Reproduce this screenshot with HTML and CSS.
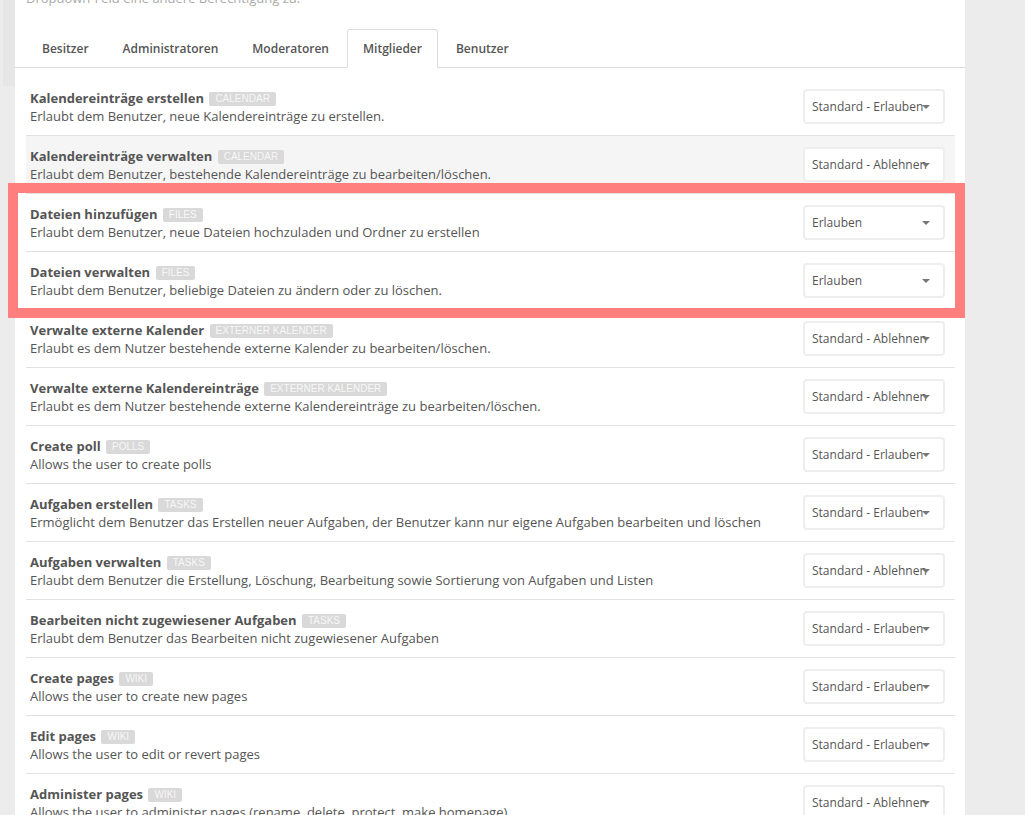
FILE: index.html
```html
<!DOCTYPE html>
<html lang="de">

<head>
    <title>Berechtigungen</title>
    <meta charset="UTF-8">
    <link rel="stylesheet" href="styles.css">
</head>

<body>
    <div class="side-strip"></div>
    <div class="panel">
        <p class="intro">Dropdown-Feld eine andere Berechtigung zu.</p>

        <ul class="tabs">
            <li>Besitzer</li>
            <li>Administratoren</li>
            <li>Moderatoren</li>
            <li class="active">Mitglieder</li>
            <li>Benutzer</li>
        </ul>

        <div class="perm-list">
            <div class="perm-row">
                <div class="perm-text">
                    <div class="perm-title">Kalendereinträge erstellen <span class="badge">calendar</span></div>
                    <div class="perm-desc">Erlaubt dem Benutzer, neue Kalendereinträge zu erstellen.</div>
                </div>
                <div class="select">Standard - Erlauben<span class="caret"></span></div>
            </div>
            <div class="perm-row hover">
                <div class="perm-text">
                    <div class="perm-title">Kalendereinträge verwalten <span class="badge">calendar</span></div>
                    <div class="perm-desc">Erlaubt dem Benutzer, bestehende Kalendereinträge zu bearbeiten/löschen.</div>
                </div>
                <div class="select">Standard - Ablehnen<span class="caret"></span></div>
            </div>

            <!-- markierte Zeilen -->
            <div class="marked">
                <div class="perm-row">
                    <div class="perm-text">
                        <div class="perm-title">Dateien hinzufügen <span class="badge">files</span></div>
                        <div class="perm-desc">Erlaubt dem Benutzer, neue Dateien hochzuladen und Ordner zu erstellen</div>
                    </div>
                    <div class="select">Erlauben<span class="caret"></span></div>
                </div>
                <div class="perm-row">
                    <div class="perm-text">
                        <div class="perm-title">Dateien verwalten <span class="badge">files</span></div>
                        <div class="perm-desc">Erlaubt dem Benutzer, beliebige Dateien zu ändern oder zu löschen.</div>
                    </div>
                    <div class="select">Erlauben<span class="caret"></span></div>
                </div>
            </div>

            <div class="perm-row">
                <div class="perm-text">
                    <div class="perm-title">Verwalte externe Kalender <span class="badge">externer kalender</span></div>
                    <div class="perm-desc">Erlaubt es dem Nutzer bestehende externe Kalender zu bearbeiten/löschen.</div>
                </div>
                <div class="select">Standard - Ablehnen<span class="caret"></span></div>
            </div>
            <div class="perm-row">
                <div class="perm-text">
                    <div class="perm-title">Verwalte externe Kalendereinträge <span class="badge">externer kalender</span></div>
                    <div class="perm-desc">Erlaubt es dem Nutzer bestehende externe Kalendereinträge zu bearbeiten/löschen.</div>
                </div>
                <div class="select">Standard - Ablehnen<span class="caret"></span></div>
            </div>
            <div class="perm-row">
                <div class="perm-text">
                    <div class="perm-title">Create poll <span class="badge">polls</span></div>
                    <div class="perm-desc">Allows the user to create polls</div>
                </div>
                <div class="select">Standard - Erlauben<span class="caret"></span></div>
            </div>
            <div class="perm-row">
                <div class="perm-text">
                    <div class="perm-title">Aufgaben erstellen <span class="badge">tasks</span></div>
                    <div class="perm-desc">Ermöglicht dem Benutzer das Erstellen neuer Aufgaben, der Benutzer kann nur eigene Aufgaben bearbeiten und löschen</div>
                </div>
                <div class="select">Standard - Erlauben<span class="caret"></span></div>
            </div>
            <div class="perm-row">
                <div class="perm-text">
                    <div class="perm-title">Aufgaben verwalten <span class="badge">tasks</span></div>
                    <div class="perm-desc">Erlaubt dem Benutzer die Erstellung, Löschung, Bearbeitung sowie Sortierung von Aufgaben und Listen</div>
                </div>
                <div class="select">Standard - Ablehnen<span class="caret"></span></div>
            </div>
            <div class="perm-row">
                <div class="perm-text">
                    <div class="perm-title">Bearbeiten nicht zugewiesener Aufgaben <span class="badge">tasks</span></div>
                    <div class="perm-desc">Erlaubt dem Benutzer das Bearbeiten nicht zugewiesener Aufgaben</div>
                </div>
                <div class="select">Standard - Erlauben<span class="caret"></span></div>
            </div>
            <div class="perm-row">
                <div class="perm-text">
                    <div class="perm-title">Create pages <span class="badge">wiki</span></div>
                    <div class="perm-desc">Allows the user to create new pages</div>
                </div>
                <div class="select">Standard - Erlauben<span class="caret"></span></div>
            </div>
            <div class="perm-row">
                <div class="perm-text">
                    <div class="perm-title">Edit pages <span class="badge">wiki</span></div>
                    <div class="perm-desc">Allows the user to edit or revert pages</div>
                </div>
                <div class="select">Standard - Erlauben<span class="caret"></span></div>
            </div>
            <div class="perm-row">
                <div class="perm-text">
                    <div class="perm-title">Administer pages <span class="badge">wiki</span></div>
                    <div class="perm-desc">Allows the user to administer pages (rename, delete, protect, make homepage)</div>
                </div>
                <div class="select">Standard - Ablehnen<span class="caret"></span></div>
            </div>
        </div>
    </div>
</body>

</html>
```

FILE: styles.css
```css
html,
body {
    margin: 0;
    padding: 0;
    background: #ececec;
    font-family: "Open Sans", "Liberation Sans", sans-serif;
    font-size: 13px;
    color: #555;
    overflow: hidden;
}

.side-strip {
    position: absolute;
    left: 3px;
    top: 0;
    width: 12px;
    height: 86px;
    background: #e6e6e6;
}

.panel {
    position: relative;
    margin-left: 15px;
    width: 950px;
    min-height: 900px;
    background: #fff;
    padding: 0 10px 0 11px;
    box-sizing: border-box;
}

.intro {
    margin: -11px 0 0 0;
    line-height: 18px;
    color: #aaa;
}

/* Reiter */
.tabs {
    list-style: none;
    margin: 22px -10px 0 -11px;
    padding: 0 0 0 11px;
    display: flex;
    border-bottom: 1px solid #ddd;
}

.tabs li {
    padding: 10px 15px;
    line-height: 17px;
    font-size: 12px;
    font-weight: 600;
    margin-right: 2px;
    margin-bottom: -1px;
    border: 1px solid transparent;
    border-radius: 3px 3px 0 0;
}

.tabs li.active {
    border-color: #ddd;
    border-bottom-color: #fff;
    background: #fff;
}

/* Liste */
.perm-list {
    padding-top: 10px;
}

.perm-row {
    display: flex;
    align-items: flex-start;
    justify-content: space-between;
    padding: 11px 10px 10px 4px;
    border-bottom: 1px solid #e2e2e2;
    line-height: 18px;
}

.perm-row.hover {
    background: #f5f5f5;
}

.perm-title {
    font-weight: 700;
}

.badge {
    display: inline-block;
    margin-left: 2px;
    padding: 0 6px;
    line-height: 14px;
    font-family: "Liberation Sans", Arial, sans-serif;
    font-size: 10px;
    font-weight: normal;
    text-transform: uppercase;
    background: #d9d9d9;
    color: #f7f7f7;
    border-radius: 2px;
    vertical-align: 1px;
}

.select {
    position: relative;
    flex: none;
    width: 142px;
    height: 35px;
    box-sizing: border-box;
    border: 2px solid #eee;
    border-radius: 4px;
    padding-left: 7px;
    line-height: 31px;
    font-size: 12px;
    white-space: nowrap;
    background: #fff;
}

.caret {
    position: absolute;
    right: 13px;
    top: 14px;
    width: 0;
    height: 0;
    border-left: 4px solid transparent;
    border-right: 4px solid transparent;
    border-top: 4px solid #777;
}

/* Markierung */
.marked {
    position: relative;
}

.marked:after {
    content: "";
    position: absolute;
    left: -18px;
    right: -10px;
    top: -11px;
    bottom: -8px;
    border: 10px solid #ff7f7f;
    pointer-events: none;
}
```
